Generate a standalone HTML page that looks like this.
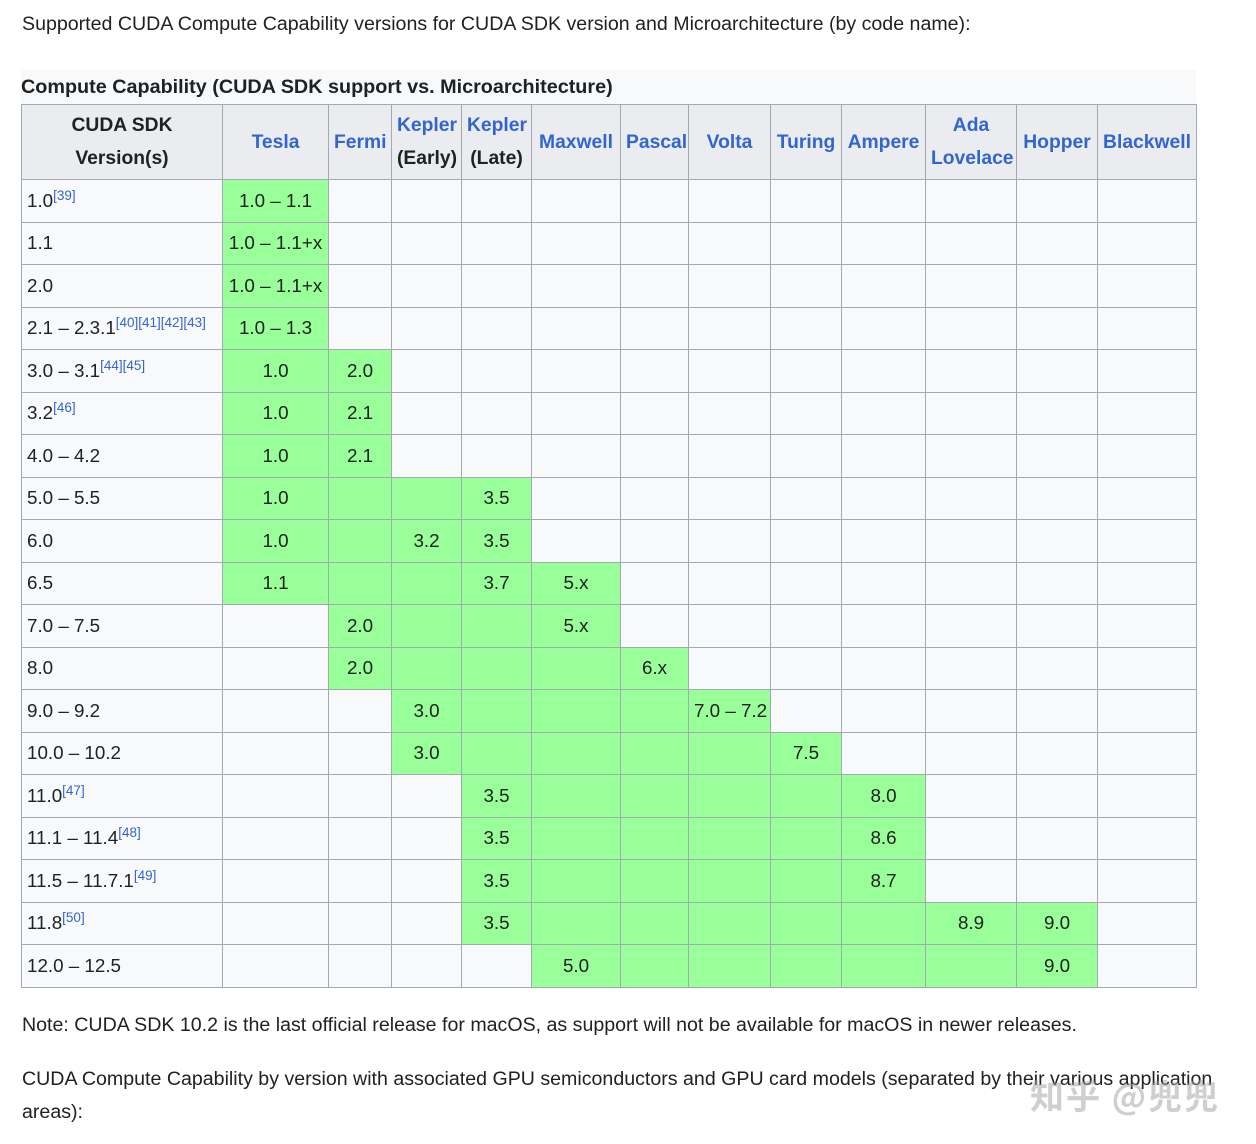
<!DOCTYPE html>
<html><head><meta charset="utf-8"><style>
body{margin:0;background:#fff;font-family:"Liberation Sans",sans-serif;color:#202122;width:1256px;height:1144px;position:relative;overflow:hidden}
p{position:absolute;left:22px;margin:0;font-size:19.6px;line-height:33px;width:1230px}
.cap{position:absolute;left:21px;top:70px;width:1175px;height:34px;background:#f8f9fa;font-weight:bold;font-size:19.8px;line-height:34px}
table{position:absolute;left:21px;top:104px;border-collapse:collapse;table-layout:fixed;width:1176px;font-size:18.8px;background:#f8f9fa}
td,th{border:1px solid #a2a9b1;padding:0 5px;text-align:center;white-space:nowrap;overflow:hidden}
th{background:#eaecf0;height:74px;line-height:33px;font-size:19.3px}
th a{color:#3366cc}
td{height:41.5px}
td:first-child{text-align:left}
.g{background:#9f9}
sup{color:#3366cc;font-size:13.5px;vertical-align:7px;line-height:0}
.wm{position:absolute;left:1030px;top:1070px;font-family:"Noto Sans CJK SC",sans-serif;font-size:34px;color:rgba(160,160,160,.5);font-weight:bold;letter-spacing:2px}
</style></head><body>
<p style="top:8px">Supported CUDA Compute Capability versions for CUDA SDK version and Microarchitecture (by code name):</p>
<div class="cap">Compute Capability (CUDA SDK support vs. Microarchitecture)</div>
<table>
<colgroup><col style="width:201px"><col style="width:106px"><col style="width:63px"><col style="width:70px"><col style="width:70px"><col style="width:89px"><col style="width:68px"><col style="width:82px"><col style="width:71px"><col style="width:84px"><col style="width:91px"><col style="width:81px"><col style="width:99px"></colgroup>
<tr><th>CUDA SDK<br>Version(s)</th><th><a>Tesla</a></th><th><a>Fermi</a></th><th><a>Kepler</a><br>(Early)</th><th><a>Kepler</a><br>(Late)</th><th><a>Maxwell</a></th><th><a>Pascal</a></th><th><a>Volta</a></th><th><a>Turing</a></th><th><a>Ampere</a></th><th><a>Ada<br>Lovelace</a></th><th><a>Hopper</a></th><th><a>Blackwell</a></th></tr>
<tr><td>1.0<sup>[39]</sup></td><td class="g">1.0 – 1.1</td><td></td><td></td><td></td><td></td><td></td><td></td><td></td><td></td><td></td><td></td><td></td></tr>
<tr><td>1.1</td><td class="g">1.0 – 1.1+x</td><td></td><td></td><td></td><td></td><td></td><td></td><td></td><td></td><td></td><td></td><td></td></tr>
<tr><td>2.0</td><td class="g">1.0 – 1.1+x</td><td></td><td></td><td></td><td></td><td></td><td></td><td></td><td></td><td></td><td></td><td></td></tr>
<tr><td>2.1 – 2.3.1<sup>[40][41][42][43]</sup></td><td class="g">1.0 – 1.3</td><td></td><td></td><td></td><td></td><td></td><td></td><td></td><td></td><td></td><td></td><td></td></tr>
<tr><td>3.0 – 3.1<sup>[44][45]</sup></td><td class="g">1.0</td><td class="g">2.0</td><td></td><td></td><td></td><td></td><td></td><td></td><td></td><td></td><td></td><td></td></tr>
<tr><td>3.2<sup>[46]</sup></td><td class="g">1.0</td><td class="g">2.1</td><td></td><td></td><td></td><td></td><td></td><td></td><td></td><td></td><td></td><td></td></tr>
<tr><td>4.0 – 4.2</td><td class="g">1.0</td><td class="g">2.1</td><td></td><td></td><td></td><td></td><td></td><td></td><td></td><td></td><td></td><td></td></tr>
<tr><td>5.0 – 5.5</td><td class="g">1.0</td><td class="g"></td><td class="g"></td><td class="g">3.5</td><td></td><td></td><td></td><td></td><td></td><td></td><td></td><td></td></tr>
<tr><td>6.0</td><td class="g">1.0</td><td class="g"></td><td class="g">3.2</td><td class="g">3.5</td><td></td><td></td><td></td><td></td><td></td><td></td><td></td><td></td></tr>
<tr><td>6.5</td><td class="g">1.1</td><td class="g"></td><td class="g"></td><td class="g">3.7</td><td class="g">5.x</td><td></td><td></td><td></td><td></td><td></td><td></td><td></td></tr>
<tr><td>7.0 – 7.5</td><td></td><td class="g">2.0</td><td class="g"></td><td class="g"></td><td class="g">5.x</td><td></td><td></td><td></td><td></td><td></td><td></td><td></td></tr>
<tr><td>8.0</td><td></td><td class="g">2.0</td><td class="g"></td><td class="g"></td><td class="g"></td><td class="g">6.x</td><td></td><td></td><td></td><td></td><td></td><td></td></tr>
<tr><td>9.0 – 9.2</td><td></td><td></td><td class="g">3.0</td><td class="g"></td><td class="g"></td><td class="g"></td><td class="g">7.0 – 7.2</td><td></td><td></td><td></td><td></td><td></td></tr>
<tr><td>10.0 – 10.2</td><td></td><td></td><td class="g">3.0</td><td class="g"></td><td class="g"></td><td class="g"></td><td class="g"></td><td class="g">7.5</td><td></td><td></td><td></td><td></td></tr>
<tr><td>11.0<sup>[47]</sup></td><td></td><td></td><td></td><td class="g">3.5</td><td class="g"></td><td class="g"></td><td class="g"></td><td class="g"></td><td class="g">8.0</td><td></td><td></td><td></td></tr>
<tr><td>11.1 – 11.4<sup>[48]</sup></td><td></td><td></td><td></td><td class="g">3.5</td><td class="g"></td><td class="g"></td><td class="g"></td><td class="g"></td><td class="g">8.6</td><td></td><td></td><td></td></tr>
<tr><td>11.5 – 11.7.1<sup>[49]</sup></td><td></td><td></td><td></td><td class="g">3.5</td><td class="g"></td><td class="g"></td><td class="g"></td><td class="g"></td><td class="g">8.7</td><td></td><td></td><td></td></tr>
<tr><td>11.8<sup>[50]</sup></td><td></td><td></td><td></td><td class="g">3.5</td><td class="g"></td><td class="g"></td><td class="g"></td><td class="g"></td><td class="g"></td><td class="g">8.9</td><td class="g">9.0</td><td></td></tr>
<tr><td>12.0 – 12.5</td><td></td><td></td><td></td><td></td><td class="g">5.0</td><td class="g"></td><td class="g"></td><td class="g"></td><td class="g"></td><td class="g"></td><td class="g">9.0</td><td></td></tr>
</table>
<p style="top:1009px">Note: CUDA SDK 10.2 is the last official release for macOS, as support will not be available for macOS in newer releases.</p>
<p style="top:1063px">CUDA Compute Capability by version with associated GPU semiconductors and GPU card models (separated by their various application<br>areas):</p>
<div class="wm">知乎 @兜兜</div>
</body></html>
